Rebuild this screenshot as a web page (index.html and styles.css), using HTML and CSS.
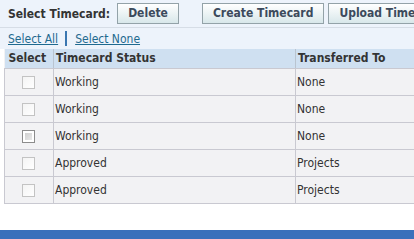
FILE: index.html
```html
<!DOCTYPE html>
<html lang="en">
<head>
    <meta charset="UTF-8">
    <title>Timecards</title>
    <link rel="stylesheet" href="styles.css">
</head>
<body>

    <div class="top-area">
        <div class="toolbar">
            <span class="toolbar-label">Select Timecard:</span>
            <button class="btn">Delete</button>
            <span class="toolbar-sep"></span>
            <button class="btn">Create Timecard</button>
            <button class="btn">Upload Timecard</button>
        </div>

        <div class="select-links">
            <a href="#">Select All</a>
            <span class="link-sep"></span>
            <a href="#">Select None</a>
        </div>
    </div>

    <!-- Timecard table -->
    <table class="timecards">
        <colgroup>
            <col class="col-select">
            <col class="col-status">
            <col class="col-transfer">
        </colgroup>
        <thead>
            <tr>
                <th>Select</th>
                <th>Timecard Status</th>
                <th>Transferred To</th>
            </tr>
        </thead>
        <tbody>
            <tr>
                <td class="check-cell"><span class="check"></span></td>
                <td>Working</td>
                <td>None</td>
            </tr>
            <tr>
                <td class="check-cell"><span class="check"></span></td>
                <td>Working</td>
                <td>None</td>
            </tr>
            <tr>
                <td class="check-cell"><span class="check check-focus"></span></td>
                <td>Working</td>
                <td>None</td>
            </tr>
            <tr>
                <td class="check-cell"><span class="check"></span></td>
                <td>Approved</td>
                <td>Projects</td>
            </tr>
            <tr>
                <td class="check-cell"><span class="check"></span></td>
                <td>Approved</td>
                <td>Projects</td>
            </tr>
        </tbody>
    </table>

    <div class="footer-bar"></div>

</body>
</html>
```

FILE: styles.css
```css
* {
    margin: 0;
    padding: 0;
    box-sizing: border-box;
}

body {
    font-family: "DejaVu Sans Condensed", "DejaVu Sans", sans-serif;
    font-size: 12px;
    color: #333;
    background: #fff;
    overflow: hidden;
}

/* Toolbar */
.top-area {
    background: #edf3fb;
}

.toolbar {
    height: 28px;
    display: flex;
    align-items: center;
    padding-left: 8px;
    border-bottom: 1px solid #d6dde6;
    white-space: nowrap;
}

.toolbar-label {
    font-weight: bold;
    color: #333;
    margin-right: 7px;
}

.btn {
    font-family: inherit;
    font-size: 12px;
    font-weight: bold;
    color: #3c4a5c;
    height: 21px;
    padding: 0 10px;
    border: 1px solid #93a2a8;
    background: linear-gradient(to bottom, #ffffff, #d8e7ea);
    margin-top: -1px;
    flex-shrink: 0;
}

.btn + .btn {
    margin-left: 4px;
}

.toolbar-sep {
    width: 2px;
    height: 11px;
    background: #5b8fc4;
    margin: 0 11px 0 12px;
}

.select-links {
    height: 21px;
    display: flex;
    align-items: center;
    padding-left: 8px;
}

.select-links a {
    color: #1f6a8f;
    text-decoration: underline;
}

.link-sep {
    width: 2px;
    height: 15px;
    background: #3a76b0;
    margin: 0 8px 0 7px;
}

/* Table */
.timecards {
    margin-left: 4px;
    width: 430px;
    border-collapse: collapse;
    table-layout: fixed;
    background: #f2f2f4;
}

.col-select { width: 49px; }
.col-status { width: 242px; }

.timecards th {
    height: 19px;
    background: #cfe0f1;
    text-align: left;
    font-weight: bold;
    color: #333;
    padding: 0 2px;
    border-left: 1px solid #b9c4d0;
    border-bottom: 1px solid #c9c9d1;
}

.timecards th:first-child {
    border-left: none;
    padding-left: 4px;
}

.timecards td {
    height: 27px;
    padding: 0 2px 0 1px;
    border: 1px solid #c9c9d1;
    color: #333;
    vertical-align: middle;
}

.check-cell {
    text-align: center;
}

.check {
    display: inline-block;
    width: 13px;
    height: 13px;
    border: 1px solid #c3c3c3;
    background: linear-gradient(135deg, #f4f4f4, #ffffff);
    vertical-align: middle;
}

.check-focus {
    border-color: #8c8c8c;
    box-shadow: inset 0 0 0 2px #fff;
    background: linear-gradient(135deg, #c8c8c8, #f0f0f0);
}

/* Bottom bar */
.footer-bar {
    margin-top: 26px;
    height: 12px;
    background: #3a70bb;
}
```
